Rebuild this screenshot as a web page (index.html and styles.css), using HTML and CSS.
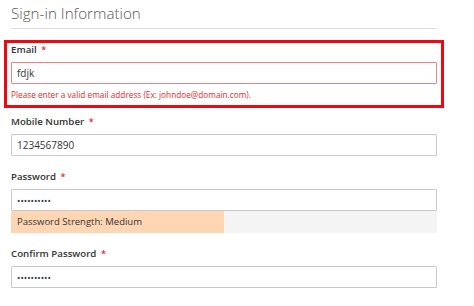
FILE: index.html
```html
<!DOCTYPE html>
<html lang="en">
<head>
    <meta charset="UTF-8">
    <meta name="viewport" content="width=device-width, initial-scale=1.0">
    <title>Sign-in Information</title>
    <link rel="stylesheet" href="styles.css">
</head>
<body>

    <div class="main_div">
        <h2 class="legend">Sign-in Information</h2>

        <div class="field field_error">
            <label class="labelEl" for="email">Email <span class="req">*</span></label>
            <input type="text" class="inputElement input_error" id="email" value="fdjk">
            <p class="worning">Please enter a valid email address (Ex: johndoe@domain.com).</p>
        </div>

        <div class="field">
            <label class="labelEl" for="mobile">Mobile Number <span class="req">*</span></label>
            <input type="text" class="inputElement" id="mobile" value="1234567890">
        </div>

        <div class="field">
            <label class="labelEl" for="password">Password <span class="req">*</span></label>
            <input type="password" class="inputElement pass" id="password" value="abcdefghij">
            <div class="strength">
                <div class="strength_fill" style="width: 50%;"></div>
                <span class="strength_text">Password Strength: Medium</span>
            </div>
        </div>

        <div class="field">
            <label class="labelEl" for="confirm">Confirm Password <span class="req">*</span></label>
            <input type="password" class="inputElement pass" id="confirm" value="abcdefghij">
        </div>
    </div>

</body>
</html>
```

FILE: styles.css
```css
p{
    padding: 0;
    margin: 0;
}

body{
    margin: 0;
    padding: 0;
    background-color: #fff;
    font-family: "Open Sans", "Liberation Sans", sans-serif;
    color: #333;
}

.main_div{
    width: 426px;
    padding-left: 11px;
}

.legend{
    margin: 0;
    padding-top: 3px;
    height: 25px;
    font-size: 15.2px;
    font-weight: 300;
    line-height: 20px;
    color: #575757;
    border-bottom: 1px solid #dcdcdc;
    margin-bottom: 14px;
}

.field{
    display: flex;
    flex-direction: column;
    margin-bottom: 14px;
}

.field_error{
    position: relative;
}

/* red highlight box around the email field */
.field_error::after{
    content: "";
    position: absolute;
    top: -3px;
    left: -7px;
    right: -7px;
    bottom: -7px;
    border: 3px solid #ec0a12;
    pointer-events: none;
}

.labelEl{
    font-size: 9.7px;
    font-weight: 600;
    line-height: 14px;
    margin-bottom: 5px;
}

.req{
    color: #e02b27;
    font-size: 9px;
    margin-left: 2px;
}

.inputElement{
    outline: none;
    border: 1px solid #c9c9c9;
    border-radius: 1px;
    width: 100%;
    height: 22px;
    font-size: 10px;
    font-family: "Open Sans", "Liberation Sans", sans-serif;
    color: #333;
    padding: 0 0 0 5px;
    margin: 0;
    box-sizing: border-box;
}

.pass{
    font-size: 9px;
}

.input_error{
    border-color: #ed8380;
}

.worning{
    color: #e02b27;
    font-size: 8.25px;
    line-height: 12px;
    margin-top: 5px;
}

.strength{
    position: relative;
    height: 22px;
    background-color: #f4f4f4;
}

.strength_fill{
    position: absolute;
    top: 0;
    left: 0;
    bottom: 0;
    background-color: #ffd6b3;
}

.strength_text{
    position: relative;
    display: block;
    padding-left: 6px;
    font-size: 9.5px;
    line-height: 22px;
    color: #333;
}
```
